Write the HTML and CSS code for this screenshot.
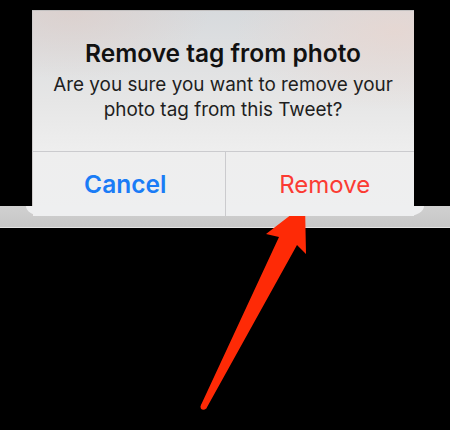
FILE: index.html
```html
<!DOCTYPE html>
<html lang="en">
<head>
    <meta charset="UTF-8">
    <meta name="viewport" content="width=device-width, initial-scale=1.0">
    <title>Remove tag from photo</title>
    <link rel="stylesheet" href="styles.css">
</head>
<body>
    <div class="screen">
        <div class="alert">
            <div class="alert-body">
                <h2 class="alert-title">Remove tag from photo</h2>
                <p class="alert-message">Are you sure you want to remove your photo tag from this Tweet?</p>
            </div>
            <div class="alert-actions">
                <button class="action cancel">Cancel</button>
                <button class="action destructive">Remove</button>
            </div>
        </div>
        <div class="shelf"></div>

        <!-- callout arrow pointing at the Remove button -->
        <svg class="callout" width="450" height="430" viewBox="0 0 450 430">
            <polygon fill="#fe2a06" points="305,204 306,254 297,245 206,409 201,405 279,237 266,234"/>
            <circle fill="#fe2a06" cx="203.4" cy="406.8" r="2.9"/>
        </svg>
    </div>
</body>
</html>
```

FILE: styles.css
```css
/* Page */
body {
  margin: 0;
  background: #000;
  font-family: 'Inter', 'Liberation Sans', sans-serif;
}

.screen {
  position: relative;
  width: 450px;
  height: 430px;
  padding-top: 10px;
  box-sizing: border-box;
  overflow: hidden;
}

/* Alert card */
.alert {
  position: relative;
  z-index: 1;
  width: 382px;
  margin-left: 32px;
  text-align: center;
  background:
    radial-gradient(ellipse 140px 70px at 10% 0%, rgba(222, 205, 200, 0.7), transparent),
    radial-gradient(ellipse 160px 80px at 95% 10%, rgba(232, 214, 208, 0.8), transparent),
    linear-gradient(#d7dadd 0px, #e6e6e6 90px, #eeeeee 140px, #eeeff0 100%);
  box-shadow: inset 0 1px 0 #c2c0c0, inset 1px 0 0 #cfcccc;
}

/* the rounded foot that spills over the shelf */
.alert::after {
  content: "";
  position: absolute;
  left: -6px;
  right: -10px;
  bottom: 0;
  height: 10px;
  background: #eeeff0;
  border-radius: 0 0 16px 16px / 0 0 10px 10px;
}

.alert-body {
  padding: 28px 20px 29px;
  border-bottom: 1px solid #cbcbce;
}

.alert-title {
  margin: 0;
  font-size: 24.5px;
  line-height: 30px;
  font-weight: 600;
  color: #111;
}

.alert-message {
  margin: 4px 0 0;
  font-size: 18.9px;
  line-height: 25px;
  color: #1e1e1e;
}

/* Buttons span the full foot width */
.alert-actions {
  position: relative;
  z-index: 1;
  display: flex;
  height: 64px;
  margin: 0 -10px 0 -6px;
}

.action {
  flex: 1;
  border: none;
  background: transparent;
  font-family: inherit;
  font-size: 24px;
  padding: 0;
}

.cancel {
  color: #1a7cf6;
  font-weight: 600;
  font-size: 24.5px;
}

.destructive {
  color: #fb3b33;
  border-left: 1px solid #cbcbce;
}

/* Grey strip under the alert */
.shelf {
  margin-top: -10px;
  height: 21px;
  background: linear-gradient(#d0d0d0, #c7c7c7);
  border-bottom: 1px solid #e4e4e4;
}

.callout {
  position: absolute;
  top: 0;
  left: 0;
  pointer-events: none;
}
```
